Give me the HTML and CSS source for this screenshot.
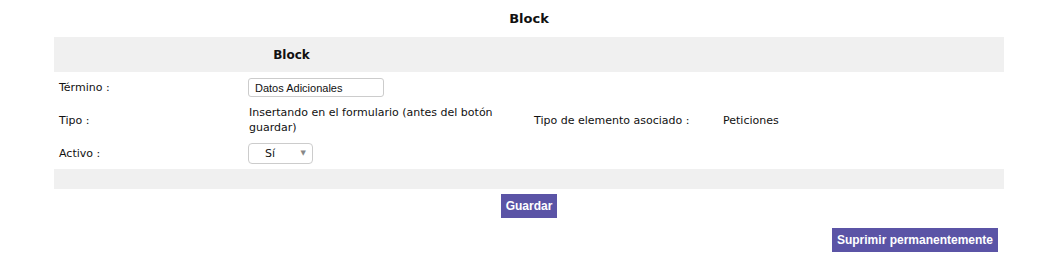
FILE: index.html
```html
<!DOCTYPE html>
<html lang="es">
<head>
	<meta charset="UTF-8" />
	<title>Block</title>
	<link rel="stylesheet" href="styles.css">
</head>
<body>
	<form action="#" id="blockForm">
		<h2 class="pageTitle">Block</h2>
		<table class="formTable">
			<colgroup>
				<col class="c1" />
				<col class="c2" />
				<col class="c3" />
				<col class="c4" />
			</colgroup>
			<tr class="headRow">
				<th colspan="2">Block</th>
				<th colspan="2"></th>
			</tr>
			<tr class="rowTermino">
				<td class="label">Término :</td>
				<td colspan="3"><input class="textField" type="text" value="Datos Adicionales" /></td>
			</tr>
			<tr class="rowTipo">
				<td class="label">Tipo :</td>
				<td class="value">Insertando en el formulario (antes del botón guardar)</td>
				<td class="label">Tipo de elemento asociado :</td>
				<td class="value value2">Peticiones</td>
			</tr>
			<tr class="rowActivo">
				<td class="label">Activo :</td>
				<td colspan="3">
					<div class="selectBox">
						<span>Sí</span>
						<span class="arrow">&#9660;</span>
					</div>
				</td>
			</tr>
			<tr class="footRow">
				<td colspan="4"></td>
			</tr>
		</table>
		<div class="saveBar">
			<input class="btn" type="submit" value="Guardar" />
		</div>
		<div class="deleteBar">
			<a class="btn" href="###">Suprimir permanentemente</a>
		</div>
	</form>
</body>
</html>
```

FILE: styles.css
```css
*{
	margin: 0;padding: 0;
}
body{
	font-family: "DejaVu Sans", Verdana, sans-serif;
	font-size: 11px;
	color: #111;
	background: #fff;
}
#blockForm{
	width: 950px;
	margin-left: 54px;
}
.pageTitle{
	font-size: 13px;
	text-align: center;
	height: 37px;
	line-height: 37px;
	font-weight: bold;
}
.formTable{
	width: 950px;
	border-collapse: collapse;
	table-layout: fixed;
}
.c1{width: 194px;}
.c2{width: 281px;}
.c3{width: 189px;}
.c4{width: 286px;}
.formTable td,.formTable th{
	vertical-align: middle;
	text-align: left;
}
.headRow th{
	background: #f0f0f0;
	height: 35px;
	text-align: center;
	font-size: 12px;
	font-weight: bold;
}
.label{
	padding-left: 5px;
}
.value{
	line-height: 15px;
	padding-left: 1px;
	padding-right: 4px;
}
.value2{
	padding-left: 5px;
}
.rowTermino td{
	height: 31px;
}
.rowTipo td{
	height: 34px;
}
.rowActivo td{
	height: 32px;
}
.footRow td{
	background: #f0f0f0;
	height: 20px;
}
.textField{
	width: 136px;
	height: 19px;
	box-sizing: border-box;
	border: 1px solid #ccc;
	border-radius: 3px;
	padding: 0 6px;
	font-family: "Liberation Sans", Arial, sans-serif;
	font-size: 11px;
	color: #111;
}
.selectBox{
	width: 65px;
	height: 21px;
	box-sizing: border-box;
	border: 1px solid #ccc;
	border-radius: 4px;
	display: flex;
	align-items: center;
	justify-content: space-between;
	padding: 0 6px 0 16px;
}
.arrow{
	font-size: 7px;
	color: #888;
}
.saveBar{
	text-align: center;
	padding-top: 5px;
}
.deleteBar{
	text-align: right;
	padding-top: 10px;
	padding-right: 6px;
}
.btn{
	display: inline-block;
	background: #5b54a6;
	color: #fff;
	border: 0;
	font-family: "Liberation Sans", Arial, sans-serif;
	font-weight: bold;
	font-size: 12px;
	height: 24px;
	line-height: 24px;
	padding: 0 5px;
	text-decoration: none;
}
```
